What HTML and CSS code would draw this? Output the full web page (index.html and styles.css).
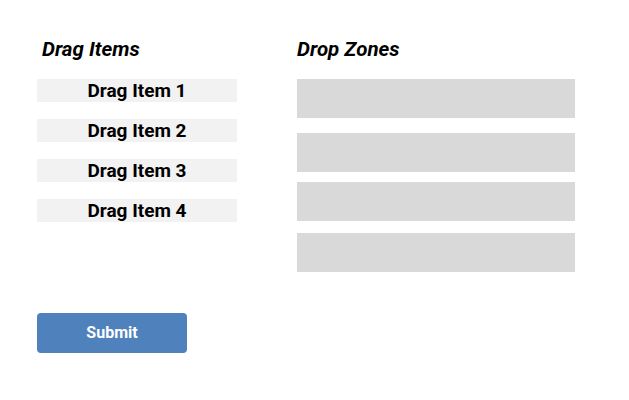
FILE: index.html
```html
<!DOCTYPE html>
<html>
<head>
<meta charset="utf-8">
<link rel="stylesheet" href="styles.css">
</head>
<body>
<div class="page">
  <div class="columns">
    <div class="col-drag">
      <h2 class="heading">Drag Items</h2>
      <div class="drag-list">
        <div class="drag-item">Drag Item 1</div>
        <div class="drag-item">Drag Item 2</div>
        <div class="drag-item">Drag Item 3</div>
        <div class="drag-item">Drag Item 4</div>
      </div>
    </div>
    <div class="col-drop">
      <h2 class="heading">Drop Zones</h2>
      <div class="drop-list">
        <div class="drop-zone z1"></div>
        <div class="drop-zone z2"></div>
        <div class="drop-zone z3"></div>
        <div class="drop-zone z4"></div>
      </div>
    </div>
  </div>
  <button class="submit">Submit</button>
</div>
</body>
</html>
```
FILE: styles.css
```css
html, body {
  margin: 0;
  padding: 0;
  background: #ffffff;
  font-family: Roboto, "Liberation Sans", sans-serif;
}
.page {
  padding: 38px 0 0 37px;
}
.columns {
  display: flex;
  gap: 60px;
}
.col-drag {
  width: 200px;
}
.col-drop {
  width: 278px;
}
.heading {
  margin: 0 0 18px 5px;
  font-size: 20.5px;
  font-weight: 700;
  font-style: italic;
  line-height: 23px;
  color: #000;
}
.col-drop .heading {
  margin-left: 0;
}
.drag-list {
  display: flex;
  flex-direction: column;
  gap: 17px;
}
.drag-item {
  height: 23px;
  background: #f2f2f2;
  text-align: center;
  font-weight: 700;
  font-size: 19px;
  line-height: 23px;
  color: #000;
}
.drop-zone {
  height: 39px;
  background: #d9d9d9;
}
.z2 { margin-top: 15px; }
.z3 { margin-top: 10px; }
.z4 { margin-top: 12px; }
.submit {
  display: block;
  margin-top: 41px;
  width: 150px;
  height: 40px;
  border: none;
  border-radius: 4px;
  background: #4f81bd;
  color: #fff;
  font-family: Roboto, "Liberation Sans", sans-serif;
  font-weight: 700;
  font-size: 16px;
  padding: 0 0 2px 0;
}
```
